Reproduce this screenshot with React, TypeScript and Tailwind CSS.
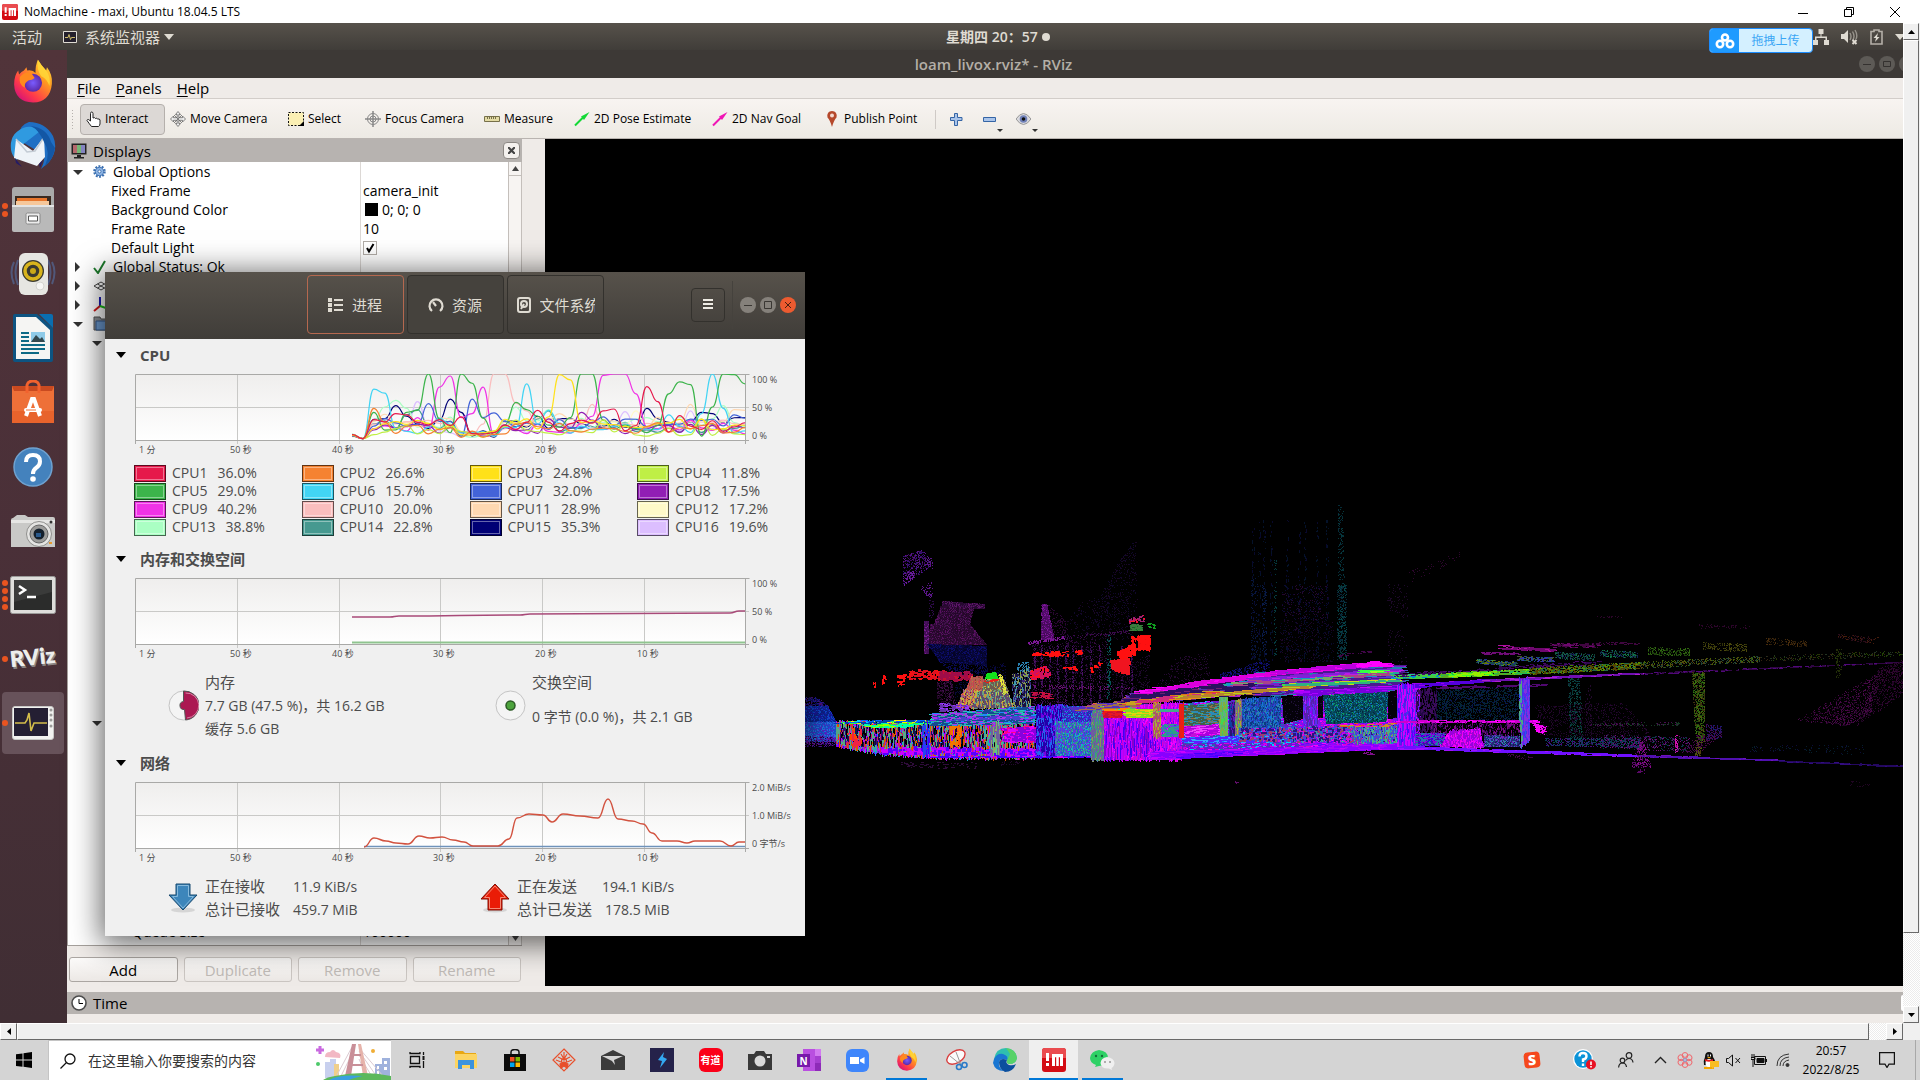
import clsx from "clsx";
import { useMemo, type ReactNode } from "react";

const App = () => {
  return (
    <div className="flex flex-col h-screen overflow-hidden bg-white select-none font-['Open_Sans','Noto_Sans_CJK_SC',sans-serif]">
      <HostTitleBar />
      <div className="flex flex-1 min-h-0">
        <RemoteDesktop />
        <VerticalScroll />
      </div>
      <HorizontalScroll />
      <Taskbar />
    </div>
  );
};

export default App;

/* ---------- outer window ---------- */

const HostTitleBar = () => {
  return (
    <header className="flex items-center h-[23px] shrink-0 pl-0.5 bg-white text-black">
      <NoMachineIcon className="size-4" />
      <h1 className="pl-1.5 text-xs">NoMachine - maxi, Ubuntu 18.04.5 LTS</h1>
      <div className="flex items-center ml-auto mr-0.5 h-full">
        <button aria-label="Minimize" className="grid place-items-center w-[46px] h-full">
          <svg width="10" height="10" stroke="#000">
            <path d="M0 6.5h10" />
          </svg>
        </button>
        <button aria-label="Restore" className="grid place-items-center w-[46px] h-full">
          <svg width="10" height="10" fill="none" stroke="#000">
            <path d="M.5 2.500h7v7h-7zM2.500 2.500v-2h7v7h-2" />
          </svg>
        </button>
        <button aria-label="Close" className="grid place-items-center w-[46px] h-full">
          <svg width="10" height="10" stroke="#000">
            <path d="M0 0l10 10M10 0L0 10" />
          </svg>
        </button>
      </div>
    </header>
  );
};

const bevel =
  "grid place-items-center bg-[#f0f0f0] border border-t-white border-l-white border-r-[#696969] border-b-[#696969]";
const track =
  "bg-[repeating-conic-gradient(#ffffff_0_25%,#ececec_0_50%)] bg-[length:2px_2px]";

const VerticalScroll = () => {
  return (
    <div className="flex flex-col w-[17px] shrink-0 bg-[#f0f0f0]">
      <button aria-label="Scroll up" className={clsx(bevel, "h-[17px] w-4")}>
        <svg width="7" height="4">
          <path d="M0 4h7L3.500 0z" />
        </svg>
      </button>
      <div className={clsx(bevel, "flex-[893] w-4")} />
      <div className={clsx(track, "flex-[73]")} />
      <button aria-label="Scroll down" className={clsx(bevel, "h-[17px] w-4")}>
        <svg width="7" height="4">
          <path d="M0 0h7L3.500 4z" />
        </svg>
      </button>
    </div>
  );
};

const HorizontalScroll = () => {
  return (
    <div className="flex h-[17px] shrink-0 bg-[#f0f0f0]">
      <button aria-label="Scroll left" className={clsx(bevel, "w-[17px]")}>
        <svg width="4" height="7">
          <path d="M4 0v7L0 3.500z" />
        </svg>
      </button>
      <div className={clsx(bevel, "flex-[1852]")} />
      <div className={clsx(track, "flex-[17]")} />
      <button aria-label="Scroll right" className={clsx(bevel, "w-[17px]")}>
        <svg width="4" height="7">
          <path d="M0 0v7l4-3.500z" />
        </svg>
      </button>
      <div className="w-[17px]" />
    </div>
  );
};

/* ---------- Ubuntu desktop ---------- */

const RemoteDesktop = () => {
  return (
    <div className="relative flex flex-col flex-1 min-w-0 overflow-hidden bg-[#efebe8]">
      <TopBar />
      <div className="flex flex-1 min-h-0">
        <Dock />
        <Rviz />
      </div>
      <div className="absolute left-[105px] top-[249px] w-[700px]">
        <SystemMonitor />
      </div>
      <button className="absolute right-[90px] top-[5px] flex w-[104px] h-[25px] rounded-sm overflow-hidden border border-[#1a8cff] bg-[#d4f0ff] text-[#3aa6f5] text-xs">
        <span className="grid place-items-center w-[29px] h-full bg-[#1f9bff]">
          <svg width="20" height="16" viewBox="0 0 20 16" fill="none" stroke="#fff" strokeWidth="2.600">
            <circle cx="10" cy="4.500" r="3" />
            <circle cx="5" cy="11" r="3.200" />
            <circle cx="15" cy="11" r="3.200" />
          </svg>
        </span>
        <span className="flex-1 self-center">拖拽上传</span>
      </button>
    </div>
  );
};

const TopBar = () => {
  return (
    <div className="grid grid-cols-[946fr_108fr_849fr] items-center h-[27px] shrink-0 bg-gradient-to-b from-[#57524b] to-[#403d39] text-[#dfdbd2] text-[15px] leading-5">
      <div className="flex items-center pl-3">
        <button>活动</button>
        <button className="flex items-center pl-[21px]">
          <svg width="14" height="12" viewBox="0 0 14 12">
            <path d="M.5.5h13v11H.5z" fill="#24202c" stroke="#dfdbd2" />
            <path d="M2 6.500h3l1-3 1.500 5 1-2H12" fill="none" stroke="#cdbb6b" />
          </svg>
          <span className="pl-2 pr-1">系统监视器</span>
          <svg width="10" height="6" fill="#dfdbd2">
            <path d="M0 0h10L5 6z" />
          </svg>
        </button>
      </div>
      <button className="flex items-center gap-1 text-sm font-semibold whitespace-nowrap">
        星期四 20：57
        <span className="size-2 rounded-full bg-[#dfdbd2]" />
      </button>
      <div className="flex items-center justify-end gap-3 overflow-hidden">
        <svg width="16" height="16" viewBox="0 0 16 16" fill="#dfdbd2">
          <path d="M5.500 0h5v5h-2v2.500H14V11h2v5h-5v-5h1.500V9H3.500v2H5v5H0v-5h2V7.500h5.500V5h-2z" />
        </svg>
        <svg width="17" height="16" viewBox="0 0 17 16" fill="#dfdbd2">
          <path d="M0 5h3l4-4v13l-4-4H0z" />
          <path d="M9 4q2 3.500 0 7M11.500 2.500q3 5 0 9M14 1q3 5 1 9" fill="none" stroke="#98948c" strokeWidth="1.400" />
          <path d="M11.500 11l4 4M15.500 11l-4 4" stroke="#dfdbd2" strokeWidth="2" />
        </svg>
        <svg width="13" height="16" viewBox="0 0 13 16">
          <path d="M1 2.500h3V1h5v1.500h3V15H1z" fill="none" stroke="#b5b0a8" strokeWidth="1.600" />
          <path d="M8 4L3.500 9H6l-1 4 4.500-5H7z" fill="#dfdbd2" />
        </svg>
        <svg width="8" height="6" fill="#dfdbd2">
          <path d="M0 0h10L5 6z" />
        </svg>
      </div>
    </div>
  );
};

const Dock = () => {
  const items: [string, ReactNode, number, boolean?][] = [
    ["Firefox", <FirefoxIcon className="size-[46px]" />, 0],
    ["Thunderbird", <ThunderbirdIcon />, 0],
    ["Files", <FilesIcon />, 2],
    ["Rhythmbox", <SpeakerIcon />, 0],
    ["LibreOffice Writer", <WriterIcon />, 0],
    ["Ubuntu Software", <SoftwareIcon />, 0],
    ["Help", <HelpIcon />, 0],
    ["Camera", <CameraIcon />, 0],
    ["Terminal", <TerminalIcon />, 4],
    ["RViz", <RvizLogo />, 1],
    ["System Monitor", <MonitorIcon />, 1, true],
  ];
  return (
    <nav className="w-[67px] shrink-0 bg-gradient-to-b from-[#51343a] via-[#4a3038] to-[#402e34]">
      <div className="flex flex-col justify-between h-[704px] pt-px">
        {items.map(([name, icon, running, active]) => (
          <button
            key={name}
            aria-label={name}
            className={clsx(
              "relative grid place-items-center size-[62px] ml-0.5 rounded",
              active && "bg-[#67525a]"
            )}
          >
            {icon}
            <span className="absolute left-0 inset-y-0 flex flex-col justify-center gap-0.5">
              {Array.from({ length: running }, (_, i) => (
                <i key={i} className="size-[6px] rounded-full bg-[#e95420]" />
              ))}
            </span>
          </button>
        ))}
      </div>
    </nav>
  );
};

/* ---------- RViz ---------- */

const Rviz = () => {
  return (
    <main className="flex flex-col flex-1 min-w-0 text-black">
      <div className="h-7 shrink-0 overflow-hidden bg-[#3d3936]">
        <div className="grid grid-cols-[1fr_auto_1fr] items-center w-[calc(100%+17px)] h-[27px]">
          <span />
          <h2 className="text-[15px] leading-5 font-semibold text-[#b4afa7]">
            loam_livox.rviz* - RViz
          </h2>
          <div className="flex justify-end gap-1 pr-[5px]">
            <RoundButton label="Minimize window" d="M4 8.500h8" />
            <RoundButton label="Maximize window" d="M4.500 5.500h7v5h-7z" />
            <RoundButton label="Close window" d="M5 5l6 6M11 5l-6 6" />
          </div>
        </div>
      </div>
      <div className="flex items-center gap-[15px] h-[21px] shrink-0 pl-2.5 border-b border-[#d2cdc9] text-[15px] leading-5">
        {["File", "Panels", "Help"].map((v) => (
          <button key={v}>
            <span className="underline underline-offset-2">{v[0]}</span>
            {v.slice(1)}
          </button>
        ))}
      </div>
      <Toolbar />
      <div className="flex flex-1 min-h-0">
        <Displays />
        <div className="w-[23px] shrink-0" />
        <div className="flex-1 min-w-0 overflow-hidden bg-black">
          <PointCloud />
        </div>
      </div>
      <div className="h-1.5 shrink-0" />
      <div className="flex items-center h-[22px] shrink-0 mb-[9px] pl-1 bg-[#b7b3b0] text-[15px] leading-5">
        <svg width="16" height="16" viewBox="0 0 16 16" fill="#fff" stroke="#4c4c4c">
          <circle cx="8" cy="8" r="7" strokeWidth="1.600" />
          <path d="M8 4v4.500h4" fill="none" stroke="#000" />
        </svg>
        <span className="pl-1.5">Time</span>
        <button aria-label="Close panel" className="ml-auto w-0.5 h-4 rounded-l bg-white" />
      </div>
    </main>
  );
};

const RoundButton = ({ label, d }: { label: string; d: string }) => {
  return (
    <button aria-label={label} className="rounded-full bg-[#5d5a56]">
      <svg width="16" height="16" fill="none" stroke="#34312f">
        <path d={d} />
      </svg>
    </button>
  );
};

const Toolbar = () => {
  const tools: [string, string, ReactNode][] = [
    [
      "Interact",
      "min-w-[85px] border-[#b5b0ac] bg-[#dcd8d5]",
      <path
        d="M5.500 10V2.500q0-1.500 1.200-1.500T8 2.500V7q2-1 2.500.5 1.500-.8 2.200.5 2-.5 2.300 1V13q-.5 2-1.500 2.500H6.500Q4.500 13 2 9.500q.5-1.500 1.500-1z"
        fill="#fff"
        stroke="#222"
      />,
    ],
    [
      "Move Camera",
      "min-w-[118px] border-transparent",
      <path
        d="M8 .5L5.500 3.500h1.700v3.200H3.500V5L.5 8l3 3V9.300h3.700v3.200H5.500L8 15.500l2.500-3H8.800V9.300h3.700V11l3-3-3-3v1.700H8.800V3.500h1.700zM4 4l8 8M12 4l-8 8"
        fill="#eee"
        stroke="#666"
        strokeWidth=".8"
      />,
    ],
    [
      "Select",
      "min-w-[77px] border-transparent",
      <g>
        <path d="M.5 1.500h15v13H.5z" fill="#fbf0b4" stroke="#111" strokeDasharray="2 1.500" />
        <path d="M16 10v5h-5z" />
      </g>,
    ],
    [
      "Focus Camera",
      "min-w-[119px] border-transparent",
      <g fill="none" stroke="#888">
        <circle cx="8" cy="8" r="5.500" />
        <circle cx="8" cy="8" r="3" />
        <path d="M8 0v16M0 8h16" strokeWidth="1.500" />
      </g>,
    ],
    [
      "Measure",
      "min-w-[90px] border-transparent",
      <g>
        <path d="M.5 5.500h15v5H.5z" fill="#e3dba4" stroke="#77704a" />
        <path d="M3.500 6v2M5.500 6v2M7.500 6v2M9.500 6v2M11.500 6v2" stroke="#77704a" />
      </g>,
    ],
    [
      "2D Pose Estimate",
      "min-w-[138px] border-transparent",
      <g>
        <path d="M1 14.500l8-8" stroke="#13d936" strokeWidth="2" />
        <path d="M15.500 1L7 5.500 10 9z" fill="#13d936" />
      </g>,
    ],
    [
      "2D Nav Goal",
      "min-w-[112px] border-transparent",
      <g>
        <path d="M1 14.500l8-8" stroke="#f015b5" strokeWidth="2" />
        <path d="M15.500 1L7 5.500 10 9z" fill="#f015b5" />
      </g>,
    ],
    [
      "Publish Point",
      "min-w-[116px] border-transparent",
      <g>
        <path d="M8 16Q6 9 3.500 6.500 2.500 0 8 0t4.500 6.500Q10 9 8 16z" fill="#b5482b" />
        <circle cx="8" cy="4.500" r="2" fill="#f4d9cf" />
      </g>,
    ],
  ];
  return (
    <div className="flex items-center h-10 shrink-0 pl-1 pt-px border-b border-[#b9b4b0] bg-gradient-to-b from-[#f8f4f1] to-[#edeae4] text-xs">
      <div className="w-1 h-5 mr-[5px] bg-[radial-gradient(#b5b0ac_30%,transparent_40%)] bg-[length:3px_3px]" />
      {tools.map(([name, cls, icon]) => (
        <button
          key={name}
          className={clsx(
            "flex items-center gap-1 h-[31px] pl-1 border rounded-sm whitespace-nowrap",
            cls
          )}
        >
          <svg width="16" height="16" viewBox="0 0 16 16" className="shrink-0">
            {icon}
          </svg>
          {name}
        </button>
      ))}
      <div className="w-px h-[19px] bg-[#cfcac6]" />
      <div className="flex items-center gap-5 pl-3.5">
        <button aria-label="Add tool">
          <svg width="13" height="13" fill="#a9c4ea" stroke="#3565a5">
            <path d="M4.500.5h3v4h4.500v3H7.500v5h-3v-5H.5v-3h4z" />
          </svg>
        </button>
        <button aria-label="Remove tool" className="relative">
          <svg width="13" height="5" fill="#a9c4ea" stroke="#3565a5">
            <path d="M.5.5h12v4H.5z" />
          </svg>
          <Caret className="absolute left-3.5 top-3" />
        </button>
        <button aria-label="Views" className="relative">
          <svg width="15" height="12" viewBox="0 0 15 12">
            <path d="M0 6q7.500-11 15 0-7.500 11-15 0z" fill="#d9d9dd" stroke="#999" />
            <circle cx="7.500" cy="6" r="3.800" fill="#6f80b8" />
            <circle cx="7.500" cy="6" r="1.800" fill="#111" />
          </svg>
          <Caret className="absolute left-4 top-4" />
        </button>
      </div>
    </div>
  );
};

const Caret = ({ className }: { className?: string }) => {
  return (
    <svg width="6" height="3" className={className}>
      <path d="M0 0h6L3 3z" fill="#333" />
    </svg>
  );
};

const Arrow = ({ open }: { open?: boolean }) => {
  return (
    <svg width="10" height="10" fill="#333">
      <path d={open ? "M0 3h10L5 8z" : "M2 0v10l5-5z"} />
    </svg>
  );
};

const Displays = () => {
  return (
    <section className="flex flex-col w-[455px] shrink-0">
      <div className="flex items-center h-[23px] shrink-0 pl-1 pr-0.5 bg-[#b7b3b0] text-[15px] leading-5">
        <svg width="16" height="17" viewBox="0 0 16 17">
          <path d="M.5 1.500h15v11H.5z" fill="#222" />
          <path d="M2 3h4v8H2z" fill="#b4686d" />
          <path d="M6 3h4v8H6z" fill="#75b675" />
          <path d="M10 3h4v8h-4z" fill="#8384c0" />
          <path d="M6 13h4v2h3v1.500H3V15h3z" fill="#222" />
        </svg>
        <span className="pl-1.5">Displays</span>
        <button
          aria-label="Close displays"
          className="grid place-items-center size-[17px] ml-auto rounded-sm border border-[#8c8884] bg-[#f4f1ee]"
        >
          <svg width="7" height="7" stroke="#444" strokeWidth="2.200">
            <path d="M0 0l7 7M7 0L0 7" />
          </svg>
        </button>
      </div>
      <div className="flex flex-1 min-h-0 border-l border-b border-[#a5a09c] bg-white">
        <ul className="flex-1 overflow-hidden text-sm">
          <TreeRow arrow="open" icon={<GearIcon />} name="Global Options" />
          <TreeRow name="Fixed Frame">camera_init</TreeRow>
          <TreeRow name="Background Color">
            <i className="size-[13px] mx-0.5 mr-1 bg-black" />
            0; 0; 0
          </TreeRow>
          <TreeRow name="Frame Rate">10</TreeRow>
          <TreeRow name="Default Light">
            <span className="relative grid size-3.5">
              <input
                type="checkbox"
                aria-label="Default Light"
                defaultChecked
                className="appearance-none size-3.5 border border-[#b0aba6] bg-white"
              />
              <svg width="14" height="14" fill="none" stroke="#000" strokeWidth="2" className="absolute pointer-events-none">
                <path d="M4 7l2 3.500L10.500 3" />
              </svg>
            </span>
          </TreeRow>
          <TreeRow
            arrow="closed"
            icon={
              <svg width="14" height="14" fill="none" stroke="#1d7a2c" strokeWidth="2">
                <path d="M1 8l4 5L12 1" />
              </svg>
            }
            name="Global Status: Ok"
          />
          <TreeRow
            arrow="closed"
            icon={
              <svg width="16" height="10" fill="none" stroke="#444">
                <path d="M1 5l7-4 7 4-7 4zM4.500 3l7 4M11.500 3l-7 4" />
              </svg>
            }
            name="Grid"
          />
          <TreeRow
            arrow="closed"
            icon={
              <svg width="16" height="16" strokeWidth="2">
                <path d="M7 9V0" stroke="#1b1bb5" />
                <path d="M7 9l-6 5" stroke="#d01818" />
                <path d="M7 9l9 3" stroke="#18c018" />
              </svg>
            }
            name="Axes"
          />
          <TreeRow
            arrow="open"
            icon={
              <svg width="16" height="15" viewBox="0 0 16 15">
                <path d="M1 1h6l1 2h8v11H1z" fill="#8c9096" stroke="#555" />
                <path d="M3 5h13v9H3z" fill="#6d9bd1" stroke="#34598c" />
              </svg>
            }
            name="mapping"
          />
          <SubRow />
          <li className="flex h-[361px]">
            <span className="w-[293px] shrink-0 border-r border-[#dcd8d5]" />
          </li>
          <SubRow />
          <li className="flex h-[190px]">
            <span className="w-[293px] shrink-0 border-r border-[#dcd8d5]" />
          </li>
          <TreeRow name="Queue Size" deep>
            100000
          </TreeRow>
          <TreeRow name="Channel Name" deep>
            intensity
          </TreeRow>
        </ul>
        <div className="flex flex-col w-3.5 shrink-0 border-x border-[#c4bfbb] bg-[#f7f4f2]">
          <button aria-label="Up" className="grid place-items-center h-3.5 border-b border-[#c4bfbb]">
            <svg width="7" height="5" fill="#444">
              <path d="M0 5h7L3.500 0z" />
            </svg>
          </button>
          <button aria-label="Down" className="grid place-items-center h-3.5 mt-auto border-t border-[#c4bfbb]">
            <svg width="7" height="5" fill="#444">
              <path d="M0 0h7L3.500 5z" />
            </svg>
          </button>
        </div>
      </div>
      <div className="grid grid-cols-4 gap-1.5 pt-[11px] pb-1 pl-0.5 pr-px text-[15px] leading-5">
        {["Add", "Duplicate", "Remove", "Rename"].map((v, idx) => (
          <button
            key={v}
            disabled={idx > 0}
            className="h-[25px] rounded-[3px] border border-[#aba6a2] bg-gradient-to-b from-[#fcfbfa] to-[#ece8e5] text-black disabled:border-[#cbc6c2] disabled:text-[#bfbab6]"
          >
            {v}
          </button>
        ))}
      </div>
    </section>
  );
};

const TreeRow = ({
  name,
  arrow,
  icon,
  deep,
  children,
}: {
  name: string;
  arrow?: "open" | "closed";
  icon?: ReactNode;
  deep?: boolean;
  children?: ReactNode;
}) => {
  return (
    <li className="flex h-[19px] leading-[19px] whitespace-nowrap">
      <div
        className={clsx(
          "flex items-center w-[293px] shrink-0 border-r border-[#dcd8d5]",
          arrow ? "pl-[5px]" : deep ? "pl-16" : "pl-[43px]"
        )}
      >
        {arrow && (
          <button aria-label={`Toggle ${name}`} className="w-5">
            <Arrow open={arrow === "open"} />
          </button>
        )}
        {icon && <span className="w-5">{icon}</span>}
        {name}
      </div>
      <div className="flex items-center pl-0.5">{children}</div>
    </li>
  );
};

const SubRow = () => {
  return (
    <li className="flex h-[19px]">
      <span className="flex items-center w-[293px] pl-6 border-r border-[#dcd8d5]">
        <Arrow open />
      </span>
    </li>
  );
};

const GearIcon = () => {
  return (
    <svg width="13" height="13" viewBox="0 0 14 14" fill="none">
      <circle cx="7" cy="7" r="5.500" stroke="#3b6fb0" strokeWidth="2.500" strokeDasharray="2 1.450" />
      <circle cx="7" cy="7" r="4.500" fill="#8db4e4" stroke="#3b6fb0" />
      <circle cx="7" cy="7" r="1.600" fill="#fff" stroke="#3b6fb0" />
    </svg>
  );
};

/* ---------- point cloud ---------- */

// quad corners: top-left, top-right, bottom-right, bottom-left
type Cloud = {
  q: number[];
  c: string[];
  n: number;
  w?: number;
  h?: number;
  fill?: string;
};

const rainbow = ["#e0e", "#a0f", "#70f", "#40f", "#28f", "#1ac", "#c0f", "#92d", "#c26", "#d50", "#5a8"];
const purples = ["#f0f", "#c0f", "#90f", "#60f", "#d0c"];
const shade = ["#1a0640", "#3a0a70", "#0a1a5a", "#000"];

const clouds: Cloud[] = [
  // far, thin background
  { q: [1120, 560, 1136, 540, 1138, 635, 1080, 635], c: ["#190626", "#10082a"], n: 380 },
  { q: [1085, 600, 1130, 590, 1135, 640, 1050, 640], c: ["#190626", "#10082a"], n: 260 },
  ...[1252, 1258, 1263, 1270, 1286, 1298, 1304, 1316, 1326].map(
    (x): Cloud => ({ q: [x, 520, x + 3, 520, x + 3, 662, x, 662], c: ["#04122a", "#08082c"], n: 45, h: 2 })
  ),
  { q: [1251, 578, 1258, 578, 1258, 660, 1251, 660], c: ["#081540"], n: 110 },
  { q: [1262, 585, 1267, 585, 1267, 655, 1262, 655], c: ["#091a48"], n: 90 },
  { q: [1274, 560, 1277, 560, 1277, 665, 1274, 665], c: ["#053a3e"], n: 60 },
  { q: [1282, 585, 1328, 585, 1328, 620, 1282, 620], c: ["#260730", "#0a0a32"], n: 260 },
  { q: [1280, 620, 1334, 620, 1334, 662, 1280, 662], c: ["#1c0628", "#080828"], n: 380 },
  { q: [1338, 505, 1343, 505, 1345, 590, 1338, 590], c: ["#053a3e", "#062c38"], n: 160 },
  { q: [1337, 585, 1347, 585, 1347, 660, 1337, 660], c: ["#05484c", "#06383c", "#08283a"], n: 430 },
  { q: [1387, 585, 1408, 580, 1408, 620, 1387, 610], c: ["#1c0828"], n: 80 },
  { q: [1388, 630, 1406, 630, 1408, 665, 1388, 665], c: ["#1c0828"], n: 60 },
  { q: [1408, 572, 1460, 552, 1464, 556, 1412, 583], c: ["#2c062c"], n: 50 },
  { q: [1175, 658, 1210, 652, 1210, 690, 1150, 695], c: ["#22082e"], n: 260 },
  // trees and facade on the left
  { q: [903, 556, 922, 550, 932, 566, 903, 586], c: ["#5a1688", "#34127a", "#3c0a5c"], n: 330 },
  { q: [903, 574, 916, 570, 912, 582, 904, 586], c: ["#6a1a9a"], n: 60 },
  { q: [924, 552, 933, 560, 933, 570, 928, 565], c: ["#5a1688"], n: 36 },
  { q: [920, 588, 934, 580, 932, 598, 926, 595], c: ["#5a1688"], n: 60 },
  { q: [929, 600, 934, 600, 934, 618, 929, 618], c: ["#2c0a48"], n: 36 },
  { q: [942, 601, 985, 604, 985, 609, 942, 608], c: ["#5e1568", "#3c0d4a"], n: 200, fill: "#260830" },
  { q: [941, 606, 974, 608, 970, 624, 934, 624], c: ["#5a1062", "#40104a", "#240628"], n: 620, fill: "#2b0932" },
  { q: [930, 624, 970, 624, 987, 645, 928, 645], c: ["#5a1062", "#40104a", "#240628"], n: 800, fill: "#2b0932" },
  { q: [924, 621, 929, 621, 929, 654, 924, 654], c: ["#7a1b92", "#4a1060"], n: 120, fill: "#3e0e50" },
  { q: [927, 644, 987, 646, 987, 666, 940, 662], c: ["#0c0c68", "#040428"], n: 900, fill: "#07073c" },
  { q: [940, 662, 987, 666, 985, 674, 950, 672], c: ["#0a0a50"], n: 170 },
  { q: [937, 681, 952, 681, 956, 706, 937, 706], c: ["#40104a", "#240628"], n: 320 },
  { q: [955, 675, 1005, 662, 1010, 700, 955, 705], c: ["#08083c"], n: 520 },
  { q: [1042, 604, 1047, 604, 1055, 640, 1041, 640], c: ["#7c1698", "#520c6a"], n: 420, fill: "#450b58" },
  { q: [1048, 604, 1065, 620, 1070, 640, 1055, 640], c: ["#2a0632"], n: 120 },
  { q: [1028, 642, 1065, 636, 1065, 639, 1028, 645], c: ["#7c1698"], n: 110 },
  { q: [1065, 636, 1130, 630, 1130, 633, 1065, 640], c: ["#3a0a4a"], n: 90 },
  { q: [1032, 645, 1110, 634, 1110, 705, 1032, 705], c: ["#2c083c", "#18062a", "#360b3e"], n: 1100 },
  ...[1034, 1041, 1049, 1057, 1065, 1072, 1081, 1090, 1099, 1121, 1131].map(
    (x): Cloud => ({ q: [x, 645, x + 2, 645, x + 2, 706, x, 706], c: ["#4c1466", "#340b50"], n: 80 })
  ),
  { q: [1107, 635, 1111, 635, 1111, 702, 1107, 702], c: ["#065456"], n: 110 },
  { q: [1032, 685, 1130, 687, 1130, 690, 1032, 688], c: ["#661070"], n: 110 },
  { q: [1112, 670, 1150, 655, 1150, 690, 1112, 700], c: ["#1e082c"], n: 320 },
  // red points
  { q: [909, 670, 940, 671, 940, 680, 909, 679], c: ["#f41212", "#e01020"], n: 100, w: 3, h: 2 },
  { q: [940, 671, 971, 672, 971, 681, 940, 680], c: ["#c81030", "#a00c48"], n: 170, w: 3, h: 2 },
  { q: [898, 675, 906, 672, 904, 684, 898, 686], c: ["#ff1010"], n: 20, w: 3, h: 2 },
  { q: [882, 677, 886, 675, 886, 683, 882, 684], c: ["#ff1010"], n: 10, w: 2, h: 2 },
  { q: [873, 683, 876, 681, 876, 687, 873, 688], c: ["#ff1010"], n: 7, w: 2, h: 2 },
  { q: [1032, 654, 1068, 651, 1068, 656, 1032, 656], c: ["#ff1010"], n: 50, w: 3, h: 2 },
  { q: [1074, 651, 1080, 651, 1085, 657, 1078, 655], c: ["#ff1010"], n: 14, w: 3, h: 2 },
  { q: [1029, 672, 1046, 665, 1052, 677, 1032, 680], c: ["#ff1020", "#d01060"], n: 80, w: 3, h: 2 },
  { q: [1064, 665, 1077, 668, 1077, 671, 1064, 669], c: ["#ff1010"], n: 16, w: 3, h: 2 },
  { q: [1091, 668, 1101, 662, 1101, 664, 1093, 674], c: ["#ff1010"], n: 18, w: 3, h: 2 },
  { q: [1111, 661, 1129, 659, 1129, 673, 1114, 671], c: ["#f01420"], n: 160, w: 3, h: 3, fill: "#e51a20" },
  { q: [1116, 654, 1134, 644, 1136, 652, 1122, 660], c: ["#ff1010"], n: 80, w: 3, h: 3 },
  { q: [1138, 636, 1150, 635, 1150, 650, 1138, 650], c: ["#ff1010"], n: 90, w: 3, h: 3, fill: "#f01010" },
  { q: [1132, 633, 1136, 633, 1136, 655, 1132, 655], c: ["#ff1010"], n: 24, w: 2, h: 2 },
  { q: [1129, 619, 1144, 615, 1144, 622, 1129, 623], c: ["#ff1030", "#a02070"], n: 30, w: 2, h: 2 },
  { q: [1131, 624, 1142, 625, 1143, 631, 1130, 631], c: ["#208a30", "#407a40"], n: 80, w: 2, fill: "#1e5a28" },
  { q: [1147, 623, 1154, 624, 1157, 630, 1150, 628], c: ["#10a020"], n: 20, w: 2 },
  { q: [1032, 692, 1050, 693, 1054, 700, 1032, 699], c: ["#a00a4a", "#c81040"], n: 60, w: 3 },
  // round tree
  { q: [971, 677, 983, 676, 984, 690, 966, 690], c: ["#d8683a", "#c84050", "#b06050"], n: 260, h: 2, fill: "#8a4a38" },
  { q: [964, 690, 984, 690, 982, 708, 956, 708], c: ["#e8783a", "#d04050", "#c0b040", "#a05a80"], n: 420, h: 2, fill: "#6a3040" },
  { q: [984, 680, 1004, 680, 1009, 692, 982, 692], c: ["#c8d040", "#a8b850", "#d8a040", "#6a9870", "#705a50"], n: 460, h: 3, fill: "#6a6038" },
  { q: [978, 692, 1008, 692, 1014, 708, 972, 708], c: ["#b8c848", "#98a850", "#c89040", "#60a088", "#604a70"], n: 680, h: 3, fill: "#50503c" },
  { q: [987, 673, 996, 672, 999, 679, 985, 679], c: ["#10e818"], n: 60, fill: "#18d820" },
  { q: [985, 680, 998, 679, 998, 682, 985, 683], c: ["#f01818"], n: 24, w: 2 },
  { q: [998, 673, 1002, 675, 1008, 695, 1003, 695], c: ["#f0e838", "#c8d040"], n: 110 },
  { q: [1012, 676, 1030, 668, 1031, 710, 1014, 710], c: ["#4060b8", "#409aa8", "#3a2478", "#889850", "#1a1040"], n: 620, h: 3 },
  { q: [1018, 664, 1028, 661, 1030, 672, 1016, 672], c: ["#2a80b0"], n: 70 },
  // blue blob behind the window edge
  { q: [805, 697, 818, 698, 828, 706, 805, 706], c: ["#50107a", "#2018a0", "#10105a"], n: 180 },
  { q: [805, 706, 828, 706, 838, 724, 805, 724], c: ["#0a30b0", "#1048d0", "#1a18a0"], n: 560, fill: "#0a2488" },
  { q: [805, 722, 838, 722, 836, 742, 805, 742], c: ["#1c60e0", "#1850d0", "#5a20d0", "#2a70e8"], n: 700, fill: "#1b50c8" },
  { q: [805, 735, 838, 738, 834, 746, 805, 747], c: ["#4018a0", "#70109a", "#200850"], n: 260 },
  // ground band
  { q: [836, 723, 882, 723, 882, 754, 836, 745], c: rainbow, n: 1300, h: 5, fill: "#5a20b8" },
  { q: [882, 723, 932, 723, 932, 756, 882, 754], c: rainbow, n: 1500, h: 6, fill: "#7018c8" },
  { q: [932, 724, 1035, 722, 1035, 757, 932, 757], c: rainbow, n: 3000, h: 6, fill: "#7a18c8" },
  { q: [840, 726, 1035, 724, 1035, 752, 840, 744], c: shade, n: 520, h: 5 },
  { q: [882, 748, 1092, 750, 1092, 756, 882, 754], c: ["#a0f", "#c0f", "#50f"], n: 420, w: 3, h: 3 },
  { q: [848, 721, 936, 720, 936, 723, 836, 724], c: ["#0cf", "#2f5", "#fe0", "#06f", "#04a"], n: 150, w: 6 },
  { q: [862, 724, 925, 723, 912, 727, 870, 728], c: ["#3f2", "#9f0", "#0fa"], n: 90, w: 6 },
  { q: [848, 728, 862, 728, 862, 745, 850, 745], c: ["#f40", "#e24"], n: 26, w: 2, h: 7 },
  { q: [950, 725, 962, 725, 962, 745, 950, 745], c: ["#f50", "#e70"], n: 34, w: 2, h: 6 },
  { q: [922, 726, 930, 726, 930, 755, 922, 755], c: ["#40f", "#24e"], n: 60, h: 8 },
  { q: [932, 714, 1035, 706, 1035, 724, 932, 726], c: ["#0ac", "#2cb", "#28f", "#3a9", "#a3e", "#144a90"], n: 1300, w: 5, fill: "#1a68b0" },
  { q: [932, 718, 1035, 716, 1035, 719, 932, 721], c: ["#72e", "#a3e", "#44c"], n: 130, w: 6 },
  { q: [940, 703, 970, 705, 970, 712, 940, 712], c: ["#93f", "#63a"], n: 120, w: 3 },
  { q: [1004, 728, 1036, 727, 1036, 742, 1004, 742], c: ["#f0f", "#f08", "#d0f", "#80d"], n: 320, w: 4, h: 2, fill: "#c010b8" },
  { q: [990, 725, 1000, 725, 1000, 754, 990, 754], c: ["#5c8", "#8a6", "#7060a0"], n: 80, h: 8 },
  { q: [1036, 706, 1070, 706, 1070, 757, 1036, 757], c: ["#31f", "#52e", "#70d", "#26e", "#20a"], n: 1400, h: 4, fill: "#3220c0" },
  { q: [1055, 722, 1092, 716, 1092, 757, 1055, 757], c: ["#19d", "#2ba", "#35d", "#398", "#63d"], n: 1300, h: 2, fill: "#2060b8" },
  { q: [1062, 706, 1092, 706, 1092, 722, 1062, 722], c: ["#32d", "#19d", "#52d"], n: 420, fill: "#2430a8" },
  { q: [932, 756, 1092, 756, 1092, 758, 932, 758], c: ["#c0f", "#40f"], n: 130, w: 6 },
  // station body
  { q: [1104, 706, 1182, 703, 1182, 760, 1104, 760], c: [...purples, "#e0f", "#b0e"], n: 2200, h: 4, fill: "#b010e8" },
  { q: [1182, 703, 1300, 697, 1300, 750, 1182, 759], c: [...purples, "#0cf", "#48f", "#53a", "#26a"], n: 2400, w: 3, fill: "#6a18d0" },
  { q: [1300, 690, 1420, 684, 1420, 748, 1300, 750], c: purples, n: 2400, w: 3, fill: "#7a18e8" },
  { q: [1104, 722, 1160, 722, 1160, 756, 1104, 756], c: ["#60f", "#40e", "#80c", "#b0f"], n: 280, h: 10 },
  { q: [1092, 706, 1104, 704, 1104, 760, 1091, 760], c: ["#6a9a70", "#90905a", "#5070b0", "#40a070", "#705aa0"], n: 600, h: 4, fill: "#5a7878" },
  { q: [1092, 703, 1136, 704, 1136, 708, 1092, 710], c: ["#e07030", "#c0b040", "#d040a0", "#60b070"], n: 120, w: 5 },
  { q: [1104, 708, 1128, 708, 1128, 711, 1104, 711], c: ["#0fa", "#f80"], n: 50, w: 5 },
  { q: [1103, 711, 1122, 711, 1122, 718, 1103, 718], c: ["#f01818", "#c81030"], n: 70, w: 3, fill: "#e01830" },
  { q: [1126, 710, 1157, 709, 1157, 718, 1126, 718], c: ["#d8e010", "#f0c010", "#80e020"], n: 120, w: 6, fill: "#d8d010" },
  { q: [1184, 706, 1220, 703, 1220, 727, 1184, 727], c: ["#7aa050", "#30a090", "#907048", "#2a8ab8", "#406048"], n: 800, w: 4, fill: "#486e68" },
  { q: [1186, 726, 1222, 724, 1222, 735, 1186, 737], c: ["#f0f", "#e4f", "#a0d"], n: 140, w: 5, fill: "#c010d8" },
  { q: [1153, 703, 1161, 703, 1161, 737, 1153, 737], c: ["#d08030", "#a0b040", "#b04a80"], n: 140, h: 4, fill: "#a06a48" },
  { q: [1161, 709, 1180, 709, 1180, 712, 1161, 712], c: ["#0bc", "#4a8"], n: 60, w: 5 },
  { q: [1162, 724, 1179, 724, 1179, 737, 1162, 737], c: ["#1a90b0", "#4a60d0", "#30a080"], n: 170, w: 3 },
  { q: [1179, 704, 1184, 704, 1184, 738, 1179, 738], c: ["#f02010"], n: 50, h: 4, fill: "#e02020" },
  { q: [1219, 692, 1228, 691, 1228, 737, 1220, 737], c: ["#40d850", "#60b080", "#80b040"], n: 150, h: 5, fill: "#58b068" },
  { q: [1229, 703, 1235, 702, 1235, 738, 1229, 738], c: ["#6018b8", "#1040a0"], n: 60, h: 4, fill: "#2a1470" },
  { q: [1242, 699, 1281, 696, 1281, 728, 1242, 730], c: ["#1078e0", "#2050d0", "#2a80b0", "#3030b0", "#0a3a80"], n: 900, h: 2, fill: "#1458b0" },
  { q: [1235, 700, 1242, 699, 1242, 738, 1235, 738], c: ["#b0a030", "#50b068", "#806090"], n: 130, h: 4, fill: "#707848" },
  { q: [1282, 698, 1303, 695, 1303, 719, 1284, 724], c: ["#201038"], n: 60, fill: "#05020a" },
  { q: [1303, 687, 1316, 687, 1318, 727, 1303, 727], c: ["#80f", "#a2f", "#53e", "#52a"], n: 260, h: 5, fill: "#641cd0" },
  { q: [1318, 697, 1323, 695, 1323, 718, 1318, 718], c: ["#201038"], n: 10, fill: "#08030f" },
  { q: [1323, 695, 1388, 692, 1387, 722, 1326, 724], c: ["#0a8088", "#0a9a60", "#1070c0", "#04283a", "#0a4a50", "#085a68"], n: 1500, fill: "#064058" },
  { q: [1388, 692, 1397, 690, 1397, 718, 1388, 719], c: ["#201038"], n: 10, fill: "#05020a" },
  { q: [1184, 738, 1300, 733, 1300, 742, 1184, 743], c: ["#18f", "#3af", "#52f"], n: 420, w: 6, fill: "#2a50e0" },
  { q: [1240, 729, 1410, 724, 1410, 743, 1240, 741], c: ["#1a7ac0", "#40a0a0", "#7020d8", "#d010d8", "#3050e0", "#a03a70", "#2a1480"], n: 1700, w: 2, h: 2 },
  { q: [1353, 726, 1400, 726, 1400, 744, 1353, 744], c: ["#40b0a0", "#60a868", "#2088c8", "#4a48d0"], n: 420, h: 3 },
  { q: [1340, 723, 1410, 723, 1410, 727, 1340, 727], c: ["#e05020", "#d09020", "#e0c"], n: 46, w: 5 },
  { q: [1150, 752, 1420, 743, 1420, 748, 1150, 760], c: ["#c0f", "#a0f", "#80f"], n: 600, w: 9, fill: "#a010f0" },
  { q: [1180, 754, 1260, 750, 1220, 757, 1180, 759], c: ["#40f", "#60f"], n: 60, w: 9 },
  // bridge deck
  { q: [1075, 708, 1140, 698, 1140, 706, 1075, 712], c: ["#8030c0", "#b02a90", "#5030c0", "#a07048"], n: 160, w: 9 },
  { q: [1220, 674, 1270, 658, 1270, 672, 1220, 680], c: ["#12127a", "#08084a"], n: 330 },
  { q: [1136, 693, 1260, 674, 1260, 694, 1120, 705], c: ["#b020c0", "#7a28b8", "#b06040", "#5030b0", "#702070", "#2a1060"], n: 1500, w: 12 },
  { q: [1260, 673, 1400, 665, 1400, 690, 1260, 696], c: ["#a818d8", "#5040d0", "#2080a8", "#7a20c8", "#4a1890"], n: 1500, w: 14, fill: "#5a1ca0" },
  { q: [1140, 691, 1275, 671, 1275, 675, 1140, 694], c: ["#f0f", "#d0d"], n: 150, w: 14 },
  { q: [1275, 671, 1375, 662, 1392, 665, 1275, 675], c: ["#f0f", "#e0e", "#b0d"], n: 240, w: 12 },
  { q: [1360, 664, 1374, 661, 1392, 666, 1360, 668], c: ["#f0f"], n: 70, w: 6, fill: "#d810e0" },
  { q: [1120, 703, 1220, 690, 1230, 693, 1130, 705], c: ["#e84028", "#e07018", "#c8a020", "#d02a80"], n: 130, w: 14 },
  { q: [1180, 697, 1310, 685, 1310, 688, 1180, 700], c: ["#e8c010", "#e89018", "#b8d018", "#b88030"], n: 150, w: 16 },
  { q: [1290, 684, 1395, 679, 1395, 682, 1290, 687], c: ["#80e810", "#3fe040", "#c8d818", "#30b080"], n: 150, w: 14 },
  { q: [1230, 682, 1390, 672, 1390, 675, 1230, 686], c: ["#2a9", "#19c", "#7a6", "#a48"], n: 150, w: 16 },
  { q: [1250, 679, 1395, 669, 1395, 671, 1250, 682], c: ["#c018e8", "#8020d8"], n: 110, w: 16 },
  { q: [1362, 670, 1388, 670, 1388, 673, 1362, 673], c: ["#9f2", "#3f4"], n: 26, w: 8 },
  { q: [1300, 691, 1400, 686, 1400, 690, 1300, 696], c: ["#c0f", "#a0f", "#70d"], n: 130, w: 14 },
  { q: [1395, 675, 1465, 673, 1465, 677, 1395, 679], c: ["#0bd", "#2c8", "#08d", "#4c4"], n: 260, w: 6, fill: "#148088" },
  { q: [1440, 673, 1530, 669, 1530, 674, 1440, 678], c: ["#6e0", "#8c0", "#2b5", "#5a2"], n: 340, w: 4 },
  { q: [1450, 674, 1490, 672, 1490, 676, 1450, 677], c: ["#4f2", "#9e0"], n: 80, w: 5 },
  { q: [1530, 668, 1640, 662, 1640, 669, 1530, 675], c: ["#480", "#680", "#264", "#540"], n: 620, w: 2 },
  { q: [1640, 662, 1760, 656, 1760, 662, 1640, 669], c: ["#460", "#541", "#243"], n: 460 },
  { q: [1760, 656, 1903, 651, 1903, 656, 1760, 662], c: ["#240", "#321", "#232"], n: 260 },
  { q: [1395, 685, 1500, 679, 1500, 681, 1395, 689], c: ["#90e", "#50d"], n: 110, w: 12 },
  { q: [1484, 680, 1640, 673, 1640, 674, 1484, 682], c: ["#9010e0", "#b020d0", "#7010b0"], n: 210, w: 9 },
  { q: [1640, 673, 1903, 662, 1903, 663, 1640, 675], c: ["#50087a", "#300644"], n: 210, w: 3 },
  { q: [1395, 674, 1600, 660, 1600, 664, 1395, 677], c: ["#48086a", "#300850"], n: 200, w: 3 },
  { q: [1440, 687, 1545, 684, 1545, 686, 1440, 689], c: ["#500870"], n: 90, w: 5 },
  // signs above the deck
  { q: [1477, 659, 1517, 662, 1517, 666, 1477, 664], c: ["#385", "#670", "#238", "#174848"], n: 190, w: 2 },
  { q: [1517, 656, 1555, 658, 1555, 662, 1517, 661], c: ["#156", "#453", "#33a"], n: 120, w: 2 },
  { q: [1555, 652, 1595, 654, 1595, 661, 1555, 659], c: ["#14664a", "#125", "#104436"], n: 230 },
  { q: [1600, 650, 1638, 652, 1638, 658, 1600, 657], c: ["#10784a", "#125", "#104436"], n: 220 },
  { q: [1648, 647, 1690, 649, 1690, 656, 1648, 655], c: ["#306810", "#1e400c"], n: 230 },
  { q: [1703, 642, 1747, 644, 1747, 652, 1703, 650], c: ["#4a480c", "#303009"], n: 190 },
  { q: [1766, 638, 1807, 641, 1807, 647, 1766, 645], c: ["#482c0c", "#2c1c09"], n: 140 },
  { q: [1837, 634, 1880, 638, 1875, 644, 1837, 639], c: ["#481c0c", "#280c18"], n: 100 },
  { q: [1500, 645, 1555, 649, 1555, 652, 1500, 649], c: ["#b010a0", "#700870"], n: 100, w: 5 },
  { q: [1550, 643, 1600, 644, 1600, 648, 1550, 647], c: ["#6c086c", "#400640"], n: 100, w: 3 },
  { q: [1600, 642, 1640, 643, 1640, 645, 1600, 645], c: ["#400640"], n: 40, w: 2 },
  { q: [1483, 652, 1520, 653, 1520, 655, 1483, 654], c: ["#700c78"], n: 34, w: 4 },
  { q: [1340, 655, 1375, 650, 1375, 652, 1340, 657], c: ["#400648"], n: 20, w: 3 },
  { q: [1696, 624, 1750, 626, 1750, 630, 1696, 628], c: ["#2c052a"], n: 54 },
  { q: [1596, 616, 1622, 616, 1622, 618, 1596, 618], c: ["#2c052a"], n: 20 },
  // piers and the lower right side
  { q: [1397, 686, 1415, 686, 1416, 745, 1397, 745], c: ["#90f", "#50f", "#43e", "#c0f"], n: 420, h: 7, fill: "#5a1ae0" },
  { q: [1416, 690, 1437, 688, 1437, 745, 1416, 746], c: ["#220845", "#3c0c5c"], n: 460, h: 3 },
  { q: [1437, 690, 1520, 687, 1520, 721, 1437, 721], c: ["#05223a", "#08154c", "#042834"], n: 1500 },
  { q: [1388, 721, 1535, 720, 1535, 723, 1388, 723], c: ["#f0f", "#c0c"], n: 130, w: 8 },
  { q: [1430, 723, 1520, 723, 1520, 737, 1430, 737], c: ["#500860", "#2c0854", "#7a0c80"], n: 420, h: 2 },
  { q: [1416, 733, 1445, 733, 1445, 746, 1416, 746], c: ["#30d", "#80d", "#27a"], n: 330, w: 2, fill: "#3a16a0" },
  { q: [1450, 731, 1480, 729, 1484, 748, 1440, 747], c: ["#f0f", "#e0e", "#c0f", "#90d"], n: 480, h: 3, fill: "#a010c0" },
  { q: [1484, 735, 1520, 736, 1520, 747, 1484, 747], c: ["#2a90a0", "#3a58d0", "#7020b8", "#141a50"], n: 360, fill: "#242c78" },
  { q: [1519, 680, 1530, 679, 1530, 741, 1521, 747], c: ["#3050f0", "#6020f0", "#8030e0"], n: 300, h: 5, fill: "#3c38e0" },
  { q: [1519, 682, 1522, 682, 1523, 746, 1520, 746], c: ["#40a0a0", "#50a880"], n: 50, h: 5 },
  { q: [1530, 721, 1538, 722, 1540, 727, 1534, 726], c: ["#f0f"], n: 20, w: 3 },
  { q: [1535, 724, 1546, 726, 1545, 735, 1537, 732], c: ["#f0f"], n: 40, w: 2, fill: "#e010e0" },
  { q: [1568, 678, 1580, 678, 1583, 738, 1570, 738], c: ["#083a34", "#082c3a", "#0c4a46"], n: 380 },
  { q: [1585, 685, 1592, 685, 1592, 745, 1585, 745], c: ["#22082c"], n: 80 },
  { q: [1535, 705, 1625, 703, 1660, 745, 1540, 735], c: ["#26062e", "#180522"], n: 850 },
  { q: [1545, 738, 1640, 738, 1640, 748, 1545, 746], c: ["#142e6c", "#480c7c", "#084850"], n: 560 },
  { q: [1600, 735, 1690, 737, 1690, 752, 1600, 748], c: ["#780c78", "#3c0c5c", "#083a46"], n: 500 },
  { q: [1675, 735, 1678, 735, 1678, 753, 1675, 753], c: ["#d010b0"], n: 36 },
  { q: [1590, 724, 1680, 722, 1680, 726, 1590, 726], c: ["#480c50", "#143a22"], n: 130 },
  { q: [1692, 673, 1705, 672, 1705, 742, 1696, 742], c: ["#34700e", "#4e5c0e", "#40320e", "#1e520c"], n: 800 },
  { q: [1696, 742, 1704, 742, 1700, 756, 1695, 756], c: ["#4e5c0e", "#50400e"], n: 90 },
  { q: [1706, 724, 1722, 726, 1722, 738, 1706, 742], c: ["#1a1a70", "#400850"], n: 170 },
  { q: [1697, 735, 1720, 735, 1700, 754, 1680, 752], c: ["#480848"], n: 130 },
  { q: [1836, 649, 1842, 649, 1842, 678, 1836, 678], c: ["#222e08"], n: 70 },
  { q: [1879, 668, 1903, 660, 1903, 694, 1856, 728], c: ["#320632", "#1e0422"], n: 640 },
  { q: [1796, 721, 1879, 672, 1872, 712, 1848, 726], c: ["#320632", "#1e0422", "#480848"], n: 850 },
  { q: [1750, 746, 1870, 745, 1870, 755, 1750, 752], c: ["#051e2c", "#0c0c38"], n: 100 },
  { q: [1400, 746, 1640, 755, 1640, 757, 1400, 749], c: ["#a010ff", "#7010ff"], n: 360, w: 9 },
  { q: [1640, 755, 1780, 760, 1780, 761, 1640, 757], c: ["#7010c0", "#5010b0"], n: 170, w: 7 },
  { q: [1780, 760, 1903, 766, 1903, 767, 1780, 762], c: ["#320c80", "#240860"], n: 150, w: 5 },
  { q: [1640, 743, 1644, 743, 1652, 768, 1630, 768], c: ["#8a0c8a", "#5a0868"], n: 190 },
  { q: [1630, 762, 1652, 762, 1646, 775, 1638, 773], c: ["#5a0868"], n: 50 },
  // stray points under the ground line
  { q: [900, 762, 985, 762, 975, 769, 905, 768], c: ["#2e0c3a"], n: 80, w: 2 },
  { q: [1000, 762, 1020, 761, 1020, 764, 1000, 766], c: ["#22082e"], n: 24 },
  { q: [1364, 752, 1374, 753, 1374, 755, 1364, 754], c: ["#80108a"], n: 16, w: 2 },
  { q: [1505, 753, 1535, 756, 1530, 760, 1510, 757], c: ["#400840"], n: 36 },
  { q: [1235, 780, 1240, 783, 1239, 785, 1236, 783], c: ["#600e68"], n: 8 },
  { q: [1850, 780, 1872, 785, 1862, 787, 1850, 786], c: ["#200522"], n: 20 },
];

const makeRandom = (seed: number) => () => {
  seed = (seed * 1664525 + 1013904223) % 4294967296;
  return seed / 4294967296;
};

const scatter = (cloud: Cloud, seed: number) => {
  const rnd = makeRandom(seed);
  const [ax, ay, bx, by, cx, cy, dx, dy] = cloud.q;
  const { w = 1, h = 1 } = cloud;
  const paths = cloud.c.map(() => "");
  for (let i = 0; i < cloud.n; i++) {
    const u = rnd();
    const v = rnd();
    const pw = Math.max(1, Math.round(w * (0.4 + rnd())));
    const ph = Math.max(1, Math.round(h * (0.4 + rnd())));
    const x = (1 - v) * (ax + (bx - ax) * u) + v * (dx + (cx - dx) * u);
    const y = (1 - v) * (ay + (by - ay) * u) + v * (dy + (cy - dy) * u);
    const k = Math.floor(rnd() * paths.length);
    paths[k] += `M${Math.round(x - pw / 2)} ${Math.round(y - ph / 2)}h${pw}v${ph}h${-pw}z`;
  }
  return paths;
};

const PointCloud = () => {
  const layers = useMemo(() => clouds.map((v, idx) => scatter(v, idx * 7919 + 17)), []);
  return (
    <svg
      viewBox="545 139 1358 847"
      preserveAspectRatio="xMinYMin slice"
      shapeRendering="crispEdges"
      className="w-full h-full"
    >
      {clouds.map((cloud, idx) => (
        <g key={idx}>
          {cloud.fill && <polygon points={cloud.q.join(" ")} fill={cloud.fill} />}
          {layers[idx].map((d, k) => (
            <path key={k} d={d} fill={cloud.c[k]} />
          ))}
        </g>
      ))}
    </svg>
  );
};

/* ---------- system monitor ---------- */

const SystemMonitor = () => {
  return (
    <section className="bg-[#f0f0f0] text-[#4c4c4c] text-sm leading-[18px] shadow-[0_4px_28px_4px_rgba(0,0,0,0.6)]">
      <div className="grid grid-cols-[1fr_auto_1fr] items-center h-[67px] pb-0.5 bg-gradient-to-b from-[#57524b] to-[#403d39] text-[#dfdbd2] text-[15px]">
        <span />
        <div className="flex gap-[3px]">
          <MonitorTab name="进程" className="border-[#b5684f]">
            <path d="M0 1h4v4H0zM0 6h4v4H0zM0 11h4v4H0zM6 2h9v2H6zM6 7h9v2H6zM6 12h9v2H6z" fill="#dfdbd2" />
          </MonitorTab>
          <MonitorTab name="资源" className="border-[#33312d] bg-[#45423d]">
            <g fill="none" stroke="#dfdbd2" strokeWidth="2.200">
              <path d="M4 14A6.500 6.500 0 1 1 12 14" />
              <path d="M5 5l3 4" />
            </g>
          </MonitorTab>
          <MonitorTab name="文件系统" className="border-[#33312d]">
            <g fill="none" stroke="#dfdbd2" strokeWidth="2">
              <rect x="2" y="1" width="12" height="14" rx="2" />
              <circle cx="8" cy="7" r="3" />
              <path d="M5 12l3-5" />
            </g>
          </MonitorTab>
        </div>
        <div className="flex items-center justify-end pr-[9px]">
          <button
            aria-label="Menu"
            className="grid place-items-center size-[34px] mr-[7px] rounded border border-[#33312d]"
          >
            <svg width="10" height="11" fill="#eeebe4">
              <path d="M0 0h10v2H0zM0 4h10v2H0zM0 8h10v2H0z" />
            </svg>
          </button>
          <span className="w-px h-12 mr-[7px] bg-[#45423d]" />
          <div className="flex gap-1">
            <button aria-label="Minimize monitor" className="rounded-full bg-[#85817b]">
              <svg width="16" height="16" fill="none" stroke="#3a3733">
                <path d="M4 8.500h8" />
              </svg>
            </button>
            <button aria-label="Maximize monitor" className="rounded-full bg-[#85817b]">
              <svg width="16" height="16" fill="none" stroke="#3a3733">
                <path d="M4.500 4.500h7v7h-7z" />
              </svg>
            </button>
            <button aria-label="Close monitor" className="rounded-full bg-[#ec5b30]">
              <svg width="16" height="16" fill="none" stroke="#47200f">
                <path d="M5 5l6 6M11 5l-6 6" />
              </svg>
            </button>
          </div>
        </div>
      </div>
      <div className="pt-[7px]">
        <MonitorSection
          title="CPU"
          className="h-[204px]"
          labels={["100 %", "50 %", "0 %"]}
          chart={<CpuLines />}
        >
          <div className="grid grid-cols-4 pl-[29px] pt-2">
            {cpus.map((v, idx) => (
              <div key={idx} className="flex items-center h-[18px] whitespace-nowrap">
                <button
                  aria-label={`CPU${idx + 1} color`}
                  className="w-8 h-[17px] border border-black/60 p-px"
                  style={{ backgroundColor: v.color }}
                >
                  <i className="block size-full border border-white/40" />
                </button>
                <span className="pl-1.5">CPU{idx + 1}</span>
                <span className="pl-2.5">{v.load}</span>
              </div>
            ))}
          </div>
        </MonitorSection>
        <MonitorSection
          title="内存和交换空间"
          className="h-[204px]"
          labels={["100 %", "50 %", "0 %"]}
          chart={
            <g fill="none" strokeWidth="1.500">
              <path d={smooth([[217, 39], [255, 39], [264, 38], [385, 37], [395, 36], [595, 35], [604, 33], [610, 33]])} stroke="#a84a78" />
              <path d="M217 64.500h393" stroke="#8fc48f" strokeWidth="2" />
            </g>
          }
        >
          <div className="grid grid-cols-[327px_1fr] pl-[63px] pt-[11px] leading-[23px] whitespace-nowrap">
            <div className="flex items-center gap-1.5">
              <svg width="31" height="31" viewBox="0 0 31 31">
                <circle cx="15.500" cy="15.500" r="14.500" fill="#f4f4f4" stroke="#c4c4c4" />
                <path d="M15.500 1a14.500 14.500 0 0 1 2 29l-1-10.500a4 4 0 1 1-1-8z" fill="#ab1852" stroke="#555" />
                <path d="M17.500 3a12.500 12.500 0 0 1 1.500 25" fill="none" stroke="#d682a3" />
              </svg>
              <p>
                <span className="text-[15px]">内存</span>
                <br />
                7.7 GB (47.5 %)，共 16.2 GB
                <br />
                缓存 5.6 GB
              </p>
            </div>
            <div className="flex items-center gap-1.5">
              <svg width="31" height="31" viewBox="0 0 31 31">
                <circle cx="15.500" cy="15.500" r="14.500" fill="#f4f4f4" stroke="#c4c4c4" />
                <circle cx="15.500" cy="15.500" r="4.500" fill="#4ca33c" stroke="#2b5a25" strokeWidth="1.500" />
              </svg>
              <div className="flex flex-col justify-between h-[57px] -mt-3">
                <p className="text-[15px]">交换空间</p>
                <p>0 字节 (0.0 %)，共 2.1 GB</p>
              </div>
            </div>
          </div>
        </MonitorSection>
        <MonitorSection
          title="网络"
          className="h-[182px]"
          labels={["2.0 MiB/s", "1.0 MiB/s", "0 字节/s"]}
          chart={
            <g fill="none" strokeWidth="1.400">
              <path d="M229 64.500h381" stroke="#6f93bb" />
              <path d={smooth(sent)} stroke="#d2523f" />
            </g>
          }
        >
          <div className="grid grid-cols-[312px_1fr] pl-[63px] pt-[11px] leading-[23px] whitespace-nowrap">
            <div className="flex items-center gap-[7px]">
              <svg width="30" height="30" viewBox="0 0 30 30">
                <ellipse cx="15" cy="27" rx="12" ry="2.500" fill="#d5d5d5" />
                <path d="M8 1h14v11h7L15 27 1 12h7z" fill="#3d86bb" stroke="#17486e" strokeLinejoin="round" />
                <path d="M9.500 2.500h11v11h5L15 25 4.500 13.500h5z" fill="none" stroke="#86b9dc" />
              </svg>
              <dl className="grid grid-cols-[88px_1fr]">
                <dt className="text-[15px]">正在接收</dt>
                <dd>11.9 KiB/s</dd>
                <dt className="text-[15px]">总计已接收</dt>
                <dd>459.7 MiB</dd>
              </dl>
            </div>
            <div className="flex items-center gap-[7px]">
              <svg width="30" height="30" viewBox="0 0 30 30">
                <ellipse cx="15" cy="27" rx="12" ry="2.500" fill="#d5d5d5" />
                <path d="M8 27h14V16h7L15 1 1 16h7z" fill="#ea1c06" stroke="#7d1006" strokeLinejoin="round" />
                <path d="M9.500 25.500h11v-11h5L15 3 4.500 14.500h5z" fill="none" stroke="#f58a76" />
              </svg>
              <dl className="grid grid-cols-[85px_1fr]">
                <dt className="text-[15px]">正在发送</dt>
                <dd>194.1 KiB/s</dd>
                <dt className="text-[15px]">总计已发送</dt>
                <dd className="pl-[3px]">178.5 MiB</dd>
              </dl>
            </div>
          </div>
        </MonitorSection>
      </div>
    </section>
  );
};

const MonitorTab = ({
  name,
  className,
  children,
}: {
  name: string;
  className: string;
  children: ReactNode;
}) => {
  return (
    <button
      className={clsx(
        "flex items-center justify-center gap-2 w-[97px] h-[59px] px-2 rounded border overflow-hidden",
        className
      )}
    >
      <svg width="16" height="16" viewBox="0 0 16 16" className="shrink-0">
        {children}
      </svg>
      <span className="overflow-hidden whitespace-nowrap">{name}</span>
    </button>
  );
};

const MonitorSection = ({
  title,
  className,
  labels,
  chart,
  children,
}: {
  title: string;
  className: string;
  labels: string[];
  chart: ReactNode;
  children: ReactNode;
}) => {
  return (
    <div className={className}>
      <button className="flex items-center h-[18px] pl-[11px] text-[15px] font-bold">
        <svg width="10" height="6" className="mr-3.5">
          <path d="M0 0h10L5 6z" />
        </svg>
        {title}
      </button>
      <div className="flex pl-[30px] pt-2.5 text-[9px] leading-3">
        <svg width="616" height="70" viewBox="0 0 616 70" className="shrink-0">
          <defs>
            <linearGradient id="plot" x2="0" y2="1">
              <stop stopColor="#efeeed" />
              <stop offset="1" stopColor="#fff" />
            </linearGradient>
          </defs>
          <path d="M.5.500h610v66H.5z" fill="url(#plot)" />
          <path
            d="M102.500 0v70M204.500 0v70M305.500 0v70M407.500 0v70M509.500 0v70M0 33.500h614"
            stroke="#c9c9c7"
          />
          <path d="M.5 70V.500h614M610.500 0v70M0 66.500h614" fill="none" stroke="#a9a9a7" />
          {chart}
        </svg>
        <div className="flex flex-col justify-between h-[68px] pl-px whitespace-nowrap">
          {labels.map((v) => (
            <span key={v}>{v}</span>
          ))}
        </div>
      </div>
      <div className="grid grid-cols-[91px_102px_101px_102px_102px_1fr] pl-[34px] text-[9px] leading-3">
        {["1 分", "50 秒", "40 秒", "30 秒", "20 秒", "10 秒"].map((v) => (
          <span key={v}>{v}</span>
        ))}
      </div>
      {children}
    </div>
  );
};

// eases between samples with a flat tangent on both ends
const smooth = (points: number[][]) =>
  points.reduce((d, [x, y], idx) => {
    if (!idx) return `M${x} ${y}`;
    const [px, py] = points[idx - 1];
    const mid = (px + x) / 2;
    return `${d}C${mid} ${py} ${mid} ${y} ${x} ${y}`;
  }, "");

const sent = [
  [229, 65], [239, 56], [251, 59], [261, 61], [273, 62], [284, 54], [295, 56],
  [307, 55], [318, 58], [329, 60], [338, 64], [363, 64], [374, 57], [382, 36],
  [394, 32], [408, 33], [417, 40], [428, 32], [445, 34], [463, 36], [473, 17],
  [483, 37], [497, 39], [508, 42], [517, 51], [527, 59], [542, 59], [552, 61],
  [560, 59], [585, 59], [596, 64], [604, 60], [610, 60],
];

// peaks are sample index -> load, the samples between them hover around base
const cpus: { color: string; load: string; base: number; peaks: Record<number, number> }[] = [
  { color: "#e6194b", load: "36.0%", base: 22, peaks: { 4: 40, 5: 38, 10: 35, 17: 45, 23: 44, 24: 47, 27: 81, 28: 58, 29: 12, 30: 37 } },
  { color: "#f58231", load: "26.6%", base: 18, peaks: { 2: 48, 3: 27, 20: 14, 21: 12 } },
  { color: "#ffe119", load: "24.8%", base: 24, peaks: { 18: 35, 19: 99, 20: 91, 21: 26 } },
  { color: "#bfef45", load: "11.8%", base: 14, peaks: { 15: 30, 23: 30, 32: 32 } },
  { color: "#3cb44b", load: "29.0%", base: 20, peaks: { 2: 42, 5: 42, 6: 45, 7: 100, 8: 32, 9: 11, 10: 100, 11: 86, 12: 33, 15: 57, 16: 46, 17: 36, 20: 34, 21: 100, 22: 100, 23: 30, 28: 22, 29: 70, 30: 88, 31: 84, 32: 6, 33: 50, 34: 100, 35: 99, 36: 85 } },
  { color: "#42d4f4", load: "15.7%", base: 17, peaks: { 2: 77, 3: 71, 4: 18, 8: 33, 16: 85, 17: 24, 18: 45, 29: 38, 32: 40, 33: 100, 34: 48, 35: 10 } },
  { color: "#4363d8", load: "32.0%", base: 24, peaks: { 7: 55, 8: 28, 11: 62, 12: 34, 13: 41, 23: 35, 35: 38, 36: 33 } },
  { color: "#911eb4", load: "17.5%", base: 17, peaks: { 18: 32, 21: 42, 22: 30, 32: 8 } },
  { color: "#f032e6", load: "40.2%", base: 18, peaks: { 6: 34, 8: 80, 9: 97, 10: 34, 11: 40, 12: 80, 13: 8, 22: 36, 23: 98, 24: 100, 25: 100, 26: 70, 27: 20, 31: 30 } },
  { color: "#fabebe", load: "20.0%", base: 24, peaks: { 12: 24, 13: 100, 14: 100, 15: 56, 16: 44, 22: 54, 34: 30 } },
  { color: "#ffd8b1", load: "28.9%", base: 27, peaks: { 3: 39, 19: 40, 31: 54, 35: 46, 36: 45 } },
  { color: "#fffac8", load: "17.2%", base: 20, peaks: { 26: 44, 28: 34 } },
  { color: "#aaffc3", load: "38.8%", base: 26, peaks: { 3: 50, 4: 60, 5: 48, 15: 50, 18: 46, 34: 52 } },
  { color: "#469990", load: "22.8%", base: 20, peaks: { 5: 38, 6: 46, 17: 32, 18: 44 } },
  { color: "#000075", load: "35.3%", base: 26, peaks: { 4: 52, 5: 36, 8: 30, 9: 62, 10: 42, 11: 6, 12: 14, 17: 36, 27: 48, 32: 42, 33: 40, 36: 34 } },
  { color: "#dcbeff", load: "19.6%", base: 19, peaks: { 6: 58, 7: 20, 25: 43, 31: 44, 32: 10 } },
];

const CpuLines = () => {
  return (
    <g fill="none" strokeWidth="1.200">
      {[...cpus].reverse().map((cpu, row) => {
        const rnd = makeRandom(row * 971 + 5);
        const points = Array.from({ length: 37 }, (_, k) => {
          let load = cpu.peaks[k] ?? cpu.base + (rnd() - 0.5) * 18;
          if (cpu.peaks[k] === undefined && k > 9 && k < 14) load = 4 + rnd() * 10;
          if (k === 0) load = 5 + rnd() * 4;
          if (k === 1) load = 2;
          return [217 + k * 10.92, 66 - load * 0.66];
        });
        return <path key={cpu.color} d={smooth(points)} stroke={cpu.color} />;
      })}
    </g>
  );
};

/* ---------- taskbar ---------- */

const Taskbar = () => {
  const apps: [string, ReactNode, string?][] = [
    ["Task View", <TaskViewIcon />],
    ["File Explorer", <ExplorerIcon />],
    ["Store", <StoreIcon />],
    ["Lattice", <LatticeIcon />],
    ["Mail", <MailIcon />],
    ["Thunder", <BoltIcon />],
    ["Youdao", <YoudaoIcon />],
    ["Camera", <SnapIcon />],
    ["OneNote", <OneNoteIcon />],
    ["Meeting", <MeetingIcon />],
    ["Firefox", <FirefoxIcon className="size-6" />, "open"],
    ["Snip", <SnipIcon />],
    ["Edge", <EdgeIcon />],
    ["NoMachine", <NoMachineIcon className="size-6" />, "active"],
    ["WeChat", <WeChatIcon />, "open"],
  ];
  return (
    <footer className="flex h-10 shrink-0 bg-[#d4d4d4] text-black">
      <button aria-label="Start" className="grid place-items-center w-12">
        <svg width="16" height="16">
          <path d="M0 2.300l6.500-.9v6.200H0zM7.500 1.200L16 0v7.600H7.500zM0 8.600h6.500v6.200L0 13.900zM7.500 8.600H16V16l-8.500-1.200z" />
        </svg>
      </button>
      <label className="flex items-center w-[343px] pl-[11px] border-t border-l border-[#c4c4c4] bg-white">
        <svg width="16" height="16" fill="none" stroke="#111" strokeWidth="1.300" className="shrink-0">
          <circle cx="10" cy="6" r="5" />
          <path d="M6.500 9.500L.5 15.500" />
        </svg>
        <input
          type="search"
          aria-label="搜索"
          placeholder="在这里输入你要搜索的内容"
          className="flex-1 min-w-0 pl-3 text-sm placeholder:text-[#333] outline-none"
        />
        <CityArt />
      </label>
      <nav className="flex pl-px">
        {apps.map(([name, icon, state]) => (
          <button
            key={name}
            aria-label={name}
            className={clsx(
              "relative grid place-items-center w-[49px]",
              state === "active" && "bg-[#efefef]"
            )}
          >
            {icon}
            {state && (
              <i
                className={clsx(
                  "absolute bottom-0 h-0.5 bg-[#0078d7]",
                  state === "active" ? "inset-x-0" : "inset-x-1"
                )}
              />
            )}
          </button>
        ))}
      </nav>
      <Tray />
    </footer>
  );
};

const Tray = () => {
  return (
    <div className="flex items-center ml-auto">
      <button aria-label="Sogou" className="w-[49px]">
        <span className="grid place-items-center size-4 rounded-sm bg-[#f5481c] text-white text-sm leading-4 font-extrabold -rotate-6">
          S
        </span>
      </button>
      <button aria-label="Help" className="w-[45px]">
        <svg width="23" height="22" viewBox="0 0 23 22">
          <circle cx="10" cy="10" r="10" fill="#fff" />
          <circle cx="10" cy="10" r="8.700" fill="#0a93d8" />
          <path d="M6.500 7.500q0-3.500 3.500-3.500t3.500 3-3.500 3.500V13M10 14.500V17" fill="none" stroke="#fff" strokeWidth="2.400" />
          <circle cx="18" cy="15.500" r="5" fill="#e81123" />
          <path d="M18 12.500v3.500M18 17v1.500" stroke="#fff" strokeWidth="1.600" />
        </svg>
      </button>
      <button aria-label="People" className="w-9">
        <svg width="16" height="16" fill="none" stroke="#222" strokeWidth="1.200">
          <circle cx="11" cy="3.500" r="2.800" />
          <circle cx="4.500" cy="8.500" r="2.300" />
          <path d="M.6 15.500Q1 11 4.500 11t4 4M7.500 8.500Q9 6.500 11 6.500q3.500 0 4 4" />
        </svg>
      </button>
      <button aria-label="Show hidden icons" className="w-[23px]">
        <svg width="13" height="8" fill="none" stroke="#222" strokeWidth="1.400">
          <path d="M1 7l5.500-5.500L12 7" />
        </svg>
      </button>
      <button aria-label="Flower" className="w-[25px]">
        <svg width="16" height="16" viewBox="-8 -8 16 16" fill="none" stroke="#ee6a70">
          {[0, 60, 120, 180, 240, 300].map((v) => (
            <ellipse key={v} cx="0" cy="-4.500" rx="2.800" ry="3" transform={`rotate(${v})`} />
          ))}
          <circle r="1.500" stroke="#79a6dd" />
        </svg>
      </button>
      <button aria-label="QQ" className="w-6">
        <svg width="17" height="17" viewBox="0 0 17 17">
          <path d="M7 0q4 0 4 5 3 4 2 8H2q-1-4 1-8 0-5 4-5z" fill="#111" />
          <ellipse cx="7" cy="11" rx="3.500" ry="4" fill="#fff" />
          <path d="M3 7q4 2 8 0v2q-4 1.500-8 0z" fill="#e51c23" />
          <path d="M5 5h4l-2 1.500zM2 15h10v2H2z" fill="#f5a800" />
          <path d="M5.500 2.500h1v2h-1zM8 2.500h1v2H8z" fill="#fff" />
          <path d="M8 9h9v6h-5l-2 2v-2H8z" fill="#f9bd24" />
        </svg>
      </button>
      <button aria-label="Volume muted" className="w-[25px]">
        <svg width="15" height="13" fill="none" stroke="#111">
          <path d="M.5 4.500h2l4-3.500v11l-4-3.500h-2zM9.500 4l4.500 5M14 4L9.500 9" />
        </svg>
      </button>
      <button aria-label="Battery" className="w-[25px]">
        <svg width="17" height="13" fill="none" stroke="#111">
          <path d="M3.500 2.500h11v8h-11zM15.500 5v3M1 0v3M3 0v3M0 3.500h4v2H0zM2 5v8" />
          <path d="M6 4.500h7v4H6z" fill="#111" />
        </svg>
      </button>
      <button aria-label="Wi-Fi" className="w-[17px]">
        <svg width="14" height="14" fill="none" stroke="#333">
          <path d="M1 13Q1 2 13 1M4 13Q4 5 13 4M7 13q0-5 6-6" />
          <circle cx="11.500" cy="12" r="1.500" fill="#333" />
        </svg>
      </button>
      <button className="w-[76px] text-xs leading-[19px] text-center">
        20:57
        <br />
        2022/8/25
      </button>
      <button aria-label="Notifications" className="grid place-items-center w-9">
        <svg width="16" height="16" fill="none" stroke="#111" strokeWidth="1.200">
          <path d="M.6.6h14.800v11.500H10L8 15.500l-2-3.400H.6z" />
        </svg>
      </button>
      <i className="w-px h-10 ml-2.5 mr-1 bg-[#a8a8a8]" />
    </div>
  );
};

/* ---------- icons ---------- */

const NoMachineIcon = ({ className }: { className?: string }) => {
  return (
    <svg viewBox="0 0 24 24" className={className}>
      <rect width="24" height="24" rx="3" fill="#d40c14" />
      <path d="M0 3q0-3 3-3h18q3 0 3 3v7H0z" fill="#ea4b4f" />
      <path d="M4 5h3v8H4zM4 15h3v3H4zM10 18V6h11v12h-3V9h-1.200v9h-2.600V9H13v9z" fill="#fff" />
    </svg>
  );
};

const FirefoxIcon = ({ className }: { className?: string }) => {
  return (
    <svg viewBox="0 0 48 56" className={className}>
      <defs>
        <linearGradient id="fx" x1="1" y1="0" x2=".2" y2="1">
          <stop stopColor="#ffec40" />
          <stop offset=".4" stopColor="#ff9a20" />
          <stop offset=".75" stopColor="#ff3a4a" />
          <stop offset="1" stopColor="#d3107a" />
        </linearGradient>
        <radialGradient id="fxb">
          <stop stopColor="#7a5cff" />
          <stop offset="1" stopColor="#5a2aa8" />
        </radialGradient>
      </defs>
      <path
        d="M30 1q4 7 10 13l1-4q7 9 6 20-2 22-23 23Q2 52 1 31 1 20 6 14l1 5q3-4 6-5l3-4 1 4q7-1 10 3 0-10 3-16z"
        fill="url(#fx)"
      />
      <circle cx="24" cy="29" r="11" fill="url(#fxb)" />
      <path d="M8 22q6-7 14-5l4 6q-3 3-7 3-6 3-5 9-8-4-6-13z" fill="#ff8a1e" />
      <path d="M30 1q4 7 10 13 6 8 4 19-3-9-10-12-6-8-4-20z" fill="#ffd93a" opacity=".8" />
    </svg>
  );
};

const ThunderbirdIcon = () => {
  return (
    <svg width="48" height="48" viewBox="0 0 48 48">
      <path d="M20 0q16 0 24 14 6 14-4 26l-8 7q4-8 3-14L10 18Q8 4 20 0z" fill="#1f6fc4" />
      <path d="M2 28Q0 12 14 6q10-4 16 4L12 24 8 38q-5-4-6-10z" fill="#2f9ae0" />
      <path d="M7 17l17 12 11-14 1 20-8 9L5 36z" fill="#eef3f8" />
      <path d="M7 17l11 13 8-1 9-14" fill="none" stroke="#c3cbd4" strokeWidth="1.500" />
      <path d="M6 36l7 9-6-4zM30 42l4-4-3 8z" fill="#251c66" />
      <path d="M22 4q16 2 20 16l4 6q-2 12-10 18 6-14-1-24Q30 8 22 4z" fill="#1357a5" />
    </svg>
  );
};

const FilesIcon = () => {
  return (
    <svg width="44" height="46" viewBox="0 0 44 46">
      <path d="M1 3q0-3 3-3h36q3 0 3 3v40H1z" fill="#a9a9a9" />
      <path d="M4 9h36v11H4z" fill="#3a2a20" />
      <path d="M6 11h30v7H6z" fill="#e8762c" />
      <path d="M5 14h33v6H5z" fill="#f6c79a" />
      <path d="M1 18h42v25q0 2-2 2H3q-2 0-2-2z" fill="#b9b9b9" />
      <path d="M1 18h42v2H1z" fill="#e4e4e4" />
      <rect x="15" y="26" width="14" height="11" rx="1.500" fill="#ececec" stroke="#8a8a8a" />
      <path d="M17.500 29h9v5h-9z" fill="#fff" stroke="#555" />
    </svg>
  );
};

const SpeakerIcon = () => {
  return (
    <svg width="48" height="44" viewBox="0 0 48 44">
      <path d="M5 10q-5 10 0 22M43 10q5 10 0 22M9 8q-5 12 0 25M39 8q5 12 0 25" fill="none" stroke="#51587a" strokeWidth="2" />
      <rect x="10" y="1" width="29" height="42" rx="6" fill="#e6e6e2" />
      <circle cx="24" cy="19" r="11" fill="#3a3a30" />
      <circle cx="24" cy="19" r="8" fill="none" stroke="#d8b41c" strokeWidth="3.500" />
      <circle cx="24" cy="19" r="3" fill="#c9a818" />
      <circle cx="31" cy="34" r="4" fill="#f6f6f4" stroke="#d4d4d0" />
    </svg>
  );
};

const WriterIcon = () => {
  return (
    <svg width="40" height="48" viewBox="0 0 40 48">
      <path d="M0 2q0-2 2-2h22l16 14v32q0 2-2 2H2q-2 0-2-2z" fill="#0d5482" />
      <path d="M26 0h12q2 0 2 2v12z" fill="#0a6eb0" />
      <path d="M3 3h20l14 13v29H3z" fill="#f5f5f3" />
      <path d="M8 18h8v2H8zM8 22h8v2H8zM8 26h8v2H8zM8 30h24v2H8zM8 34h24v2H8zM8 38h18v2H8z" fill="#0d6a86" />
      <path d="M18 18h14v10H18z" fill="#8fcbe8" />
      <path d="M18 28l5-7 4 4 2-2 3 5z" fill="#33484e" />
    </svg>
  );
};

const SoftwareIcon = () => {
  return (
    <svg width="42" height="44" viewBox="0 0 42 44">
      <path d="M0 6h42v37H0z" fill="#ee7038" />
      <path d="M0 6h42l-2 5H2z" fill="#c94a20" />
      <path d="M0 31h42v12H0z" fill="#e8632c" />
      <path d="M15 13V5q1-4 6-4t6 4v8" fill="none" stroke="#f2622e" strokeWidth="3" />
      <path d="M14 36l6-17h2l6 17" fill="none" stroke="#fff" strokeWidth="4" />
      <path d="M14 30h14" stroke="#fff" strokeWidth="4" strokeLinecap="round" />
      <path d="M14 30h10" stroke="#ee7038" strokeWidth="1" />
    </svg>
  );
};

const HelpIcon = () => {
  return (
    <svg width="40" height="40" viewBox="0 0 40 40">
      <circle cx="20" cy="20" r="19" fill="#4482bd" stroke="#6fa2d0" strokeWidth="1.500" />
      <path d="M13 15q0-7 7-7t7 6.500q0 4-4 6.500-3 2-3 6" fill="none" stroke="#fff" strokeWidth="4" />
      <circle cx="20" cy="32" r="2.800" fill="#fff" />
    </svg>
  );
};

const CameraIcon = () => {
  return (
    <svg width="44" height="32" viewBox="0 0 44 32">
      <path d="M0 5q0-2 2-2L6 0h8l3 2h25q2 0 2 2v28H0z" fill="#c9c9c7" />
      <path d="M0 5h44v3H0z" fill="#e6e6e4" />
      <circle cx="28" cy="19" r="12.500" fill="#e4e4e2" stroke="#8f8f8d" />
      <circle cx="28" cy="19" r="9" fill="#9c9c9a" stroke="#666" />
      <circle cx="28" cy="19" r="5.500" fill="#14202c" />
      <path d="M25 18h5v4h-5z" fill="#2a5a8c" />
      <circle cx="40" cy="7" r="1.500" fill="#333" />
      <path d="M38 27h3v2h-3z" fill="#e89a30" />
    </svg>
  );
};

const TerminalIcon = () => {
  return (
    <svg width="46" height="38" viewBox="0 0 46 38">
      <rect x=".5" y=".5" width="45" height="37" rx="2" fill="#dededb" stroke="#9a9a98" />
      <path d="M4 4h38v30H4z" fill="#2b2c2b" />
      <path d="M4 4h38v12L4 26z" fill="#3a3b3a" />
      <path d="M9 10l6 4-6 4M17 21h9" fill="none" stroke="#fff" strokeWidth="2.500" />
    </svg>
  );
};

const RvizLogo = () => {
  return (
    <span className="pb-1 text-[22px] leading-6 font-extrabold text-[#eeeeec] -rotate-6 [text-shadow:1px_2px_0_#8b8685] font-['Lato',sans-serif]">
      RViz
    </span>
  );
};

const MonitorIcon = () => {
  return (
    <svg width="42" height="34" viewBox="0 0 42 34">
      <rect x=".5" y=".5" width="41" height="33" rx="2.500" fill="#f2f2f0" stroke="#c8c8c6" />
      <path d="M2 2h34v28H2z" fill="#241f33" />
      <path d="M3 17h10l2-3 2-7 2 18 3-8h13" fill="none" stroke="#d3bd4b" strokeWidth="1.600" />
      {[4, 9, 14, 20].map((v) => (
        <circle key={v} cx="39" cy={v} r="1.500" fill="#9a9a98" />
      ))}
    </svg>
  );
};

const CityArt = () => {
  return (
    <svg width="76" height="38" viewBox="0 0 76 38" className="shrink-0">
      <path d="M10 20h6v16h-6zM15 17h6v19h-6z" fill="#c8d0ee" />
      <path d="M19 22h5v14h-5z" fill="#f0cf8a" />
      <path d="M60 22h7v14h-7zM67 16h8v20h-8z" fill="#9fb2dd" />
      <path d="M62 24h2v3h-2zM62 29h2v3h-2zM69 19h3v3h-3zM69 25h3v3h-3z" fill="#fff" />
      <path d="M10 15q0-5 5-5 3-4 6 0 6 1 4 6z" fill="#f2b8c4" />
      <path d="M5 4v8M1 8h8" stroke="#c96ae0" strokeWidth="3" />
      <circle cx="3" cy="22" r="2" fill="#4cc96a" />
      <circle cx="58" cy="9" r="2" fill="#f0ae36" />
      <path d="M37 5L22 33M39 8L26 34M44 6l24 28M44 9l18 26M44 13l12 20M44 17l7 16" stroke="#dccbd2" />
      <path d="M37 2h4l-5 32h-6z" fill="#c98f98" />
      <path d="M43 2h3l7 32h-5z" fill="#e6b3aa" />
      <path d="M38 12h8v2h-8zM37 22h11v2H37z" fill="#c98f98" />
      <path d="M20 34q28-6 56 0v4H8q4-3 12-4z" fill="#5cb85c" />
      <path d="M14 38q10-6 34-4-10 2-14 4z" fill="#3aa0e0" />
    </svg>
  );
};

const TaskViewIcon = () => {
  return (
    <svg width="16" height="16" fill="none" stroke="#111" strokeWidth="1.300">
      <path d="M1.500 4.500h9v7h-9zM1 0v1.500h10V0M1 16v-1.500h10V16M14.500 0v3M14.500 9v7" />
      <path d="M13.500 4h2v4h-2z" fill="#111" stroke="none" />
    </svg>
  );
};

const ExplorerIcon = () => {
  return (
    <svg width="22" height="18" viewBox="0 0 22 18">
      <path d="M0 0h8l2 2h11v4H0z" fill="#e8a713" />
      <path d="M0 3h22v14H0z" fill="#fcd462" />
      <path d="M3 9h16v9h-4v-4H7v4H3z" fill="#3d93dd" />
    </svg>
  );
};

const StoreIcon = () => {
  return (
    <svg width="22" height="22" viewBox="0 0 22 22">
      <path d="M7 6V3q0-2.500 4-2.500T15 3v3" fill="none" stroke="#111" strokeWidth="1.500" />
      <path d="M0 5h22v17H0z" fill="#0c0c0c" />
      <path d="M6 8h4.500v4.500H6z" fill="#f25022" />
      <path d="M11.500 8H16v4.500h-4.500z" fill="#7fba00" />
      <path d="M6 13.500h4.500V18H6z" fill="#00a4ef" />
      <path d="M11.500 13.500H16V18h-4.500z" fill="#ffb900" />
    </svg>
  );
};

const LatticeIcon = () => {
  return (
    <svg width="24" height="24" viewBox="0 0 24 24" fill="none" stroke="#e8502c" strokeWidth="1.200">
      <path d="M12 1l11 11-11 11L1 12zM12 4v6M9 6l3 5 3-5M6 9l6 3 6-3M4 12l5 2M20 12l-5 2" />
      <circle cx="12" cy="13" r="2.500" />
      <path d="M8 16l4-2 4 2-1 4-3-2-3 2z" fill="#e8502c" />
    </svg>
  );
};

const MailIcon = () => {
  return (
    <svg width="24" height="20" viewBox="0 0 24 20">
      <path d="M12 0l12 6v14H0V6z" fill="#3b3b3b" />
      <path d="M1 6h21l-9 4 1 5-3-4z" fill="#d4d4d4" />
    </svg>
  );
};

const BoltIcon = () => {
  return (
    <svg width="24" height="24" viewBox="0 0 24 24">
      <path d="M0 0h24v24H0z" fill="#25224a" />
      <path d="M14 4l-6 8 4 1-2 7 7-9-4-2z" fill="#33a7f0" />
    </svg>
  );
};

const YoudaoIcon = () => {
  return (
    <span className="grid place-items-center size-6 rounded-md bg-[#fb0018] text-white text-[10px] leading-3 font-bold">
      有道
    </span>
  );
};

const SnapIcon = () => {
  return (
    <svg width="24" height="20" viewBox="0 0 24 20">
      <path d="M0 4h6l2-3h8l2 3h6v16H0z" fill="#393939" />
      <circle cx="12" cy="11" r="5.500" fill="#d9d9d9" />
      <path d="M19 6h3v2h-3z" fill="#d4d4d4" />
    </svg>
  );
};

const OneNoteIcon = () => {
  return (
    <span className="relative grid size-6">
      <svg width="24" height="24" viewBox="0 0 24 24">
        <path d="M6 1h18v22H6z" fill="#b94fe0" />
        <path d="M18 1h6v7h-6z" fill="#d27af0" />
        <path d="M18 8h6v7h-6z" fill="#a63fd0" />
        <path d="M18 15h6v8h-6z" fill="#8e2bb8" />
        <path d="M0 6h13v13H0z" fill="#7719aa" />
      </svg>
      <b className="absolute left-[3px] top-[7px] text-[10px] leading-3 text-white">N</b>
    </span>
  );
};

const MeetingIcon = () => {
  return (
    <svg width="23" height="23" viewBox="0 0 23 23">
      <rect width="23" height="23" rx="6" fill="#3f86fb" />
      <path d="M4 8h9v7H4zM14 10.500L18.500 8v7L14 12.500z" fill="#fff" />
    </svg>
  );
};

const SnipIcon = () => {
  return (
    <svg width="24" height="22" viewBox="0 0 24 22" fill="none">
      <ellipse cx="12" cy="8" rx="10" ry="6" transform="rotate(-30 12 8)" fill="#fafafa" stroke="#d84040" strokeWidth="1.400" />
      <path d="M6 7l10 8M12 3l5 13" stroke="#999" />
      <circle cx="15" cy="18" r="2.500" stroke="#2a7ac8" strokeWidth="1.600" />
      <circle cx="20.500" cy="16" r="2.500" stroke="#2a7ac8" strokeWidth="1.600" />
    </svg>
  );
};

const EdgeIcon = () => {
  return (
    <svg width="24" height="24" viewBox="0 0 24 24">
      <path d="M1 11Q3 0 13 0q10 1 11 10-1 6-8 6-3-1-2-4-2-5-13-1z" fill="#2fbfb0" />
      <path d="M13 0q10 1 11 10-1 6-8 6-3-1-2-4l3-6z" fill="#57d268" />
      <path d="M1 11q3-6 9-5 6 2 4 6-6-3-8 2-1 6 5 9-9 0-11-8z" fill="#1976d2" />
      <path d="M6 14q2-5 8-2-2 3 2 5 4 1 7-1-3 8-11 8-6-3-6-10z" fill="#0b4f9e" />
    </svg>
  );
};

const WeChatIcon = () => {
  return (
    <svg width="25" height="21" viewBox="0 0 25 21">
      <path d="M9 0q9 1 9 8t-9 8l-4 1 1-2Q0 13 0 8 1 1 9 0z" fill="#2fd166" />
      <circle cx="6" cy="6" r="1.200" fill="#14703a" />
      <circle cx="12" cy="6" r="1.200" fill="#14703a" />
      <path d="M17 7q7 1 7.500 6-.5 4-3 5l.5 2-3-1.500q-8 .5-8.500-5.500Q11 8 17 7z" fill="#f0f0f0" />
      <circle cx="15" cy="12" r="1" fill="#999" />
      <circle cx="20" cy="12" r="1" fill="#999" />
    </svg>
  );
};
